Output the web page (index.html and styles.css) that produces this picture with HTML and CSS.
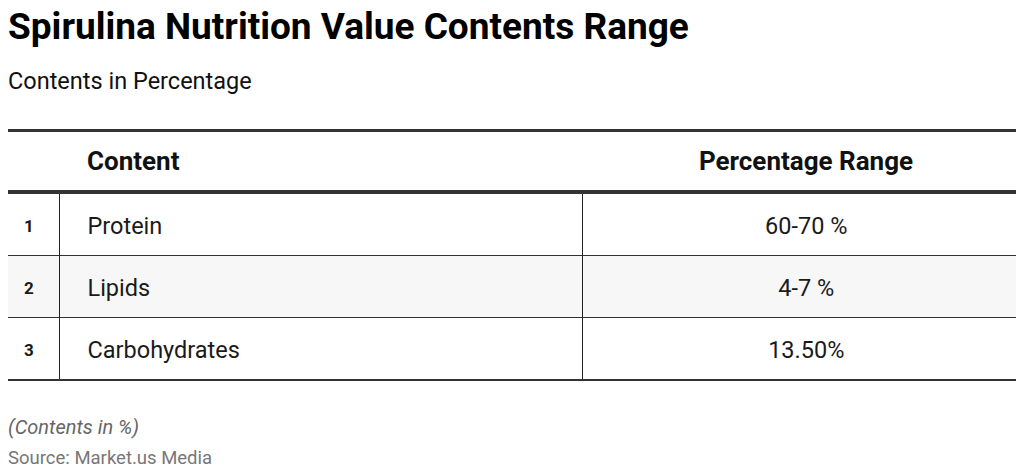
FILE: index.html
```html
<!DOCTYPE html>
<html lang="en">
<head>
<meta charset="utf-8">
<title>Spirulina Nutrition Value Contents Range</title>
<link rel="stylesheet" href="styles.css">
</head>
<body>
<div class="page">
  <h1 class="title">Spirulina Nutrition Value Contents Range</h1>
  <p class="subtitle">Contents in Percentage</p>
  <table class="data">
    <thead>
      <tr>
        <th class="c-num"></th>
        <th class="c-name">Content</th>
        <th class="c-val">Percentage Range</th>
      </tr>
    </thead>
    <tbody>
      <tr>
        <td class="c-num">1</td>
        <td class="c-name">Protein</td>
        <td class="c-val">60-70 %</td>
      </tr>
      <tr class="alt">
        <td class="c-num">2</td>
        <td class="c-name">Lipids</td>
        <td class="c-val">4-7 %</td>
      </tr>
      <tr>
        <td class="c-num">3</td>
        <td class="c-name">Carbohydrates</td>
        <td class="c-val">13.50%</td>
      </tr>
    </tbody>
  </table>
  <p class="note">(Contents in %)</p>
  <p class="source">Source: Market.us Media</p>
</div>
</body>
</html>
```

FILE: styles.css
```css
html, body {
  margin: 0;
  padding: 0;
  background: #fff;
}
body {
  padding: 8px;
  font-family: Roboto, "Liberation Sans", Arial, sans-serif;
  color: #1a1a1a;
}
.page {
  width: 1008px;
}
.title {
  margin: 0;
  font-size: 37px;
  line-height: 38px;
  font-weight: 700;
  color: #000;
}
.subtitle {
  margin: 21px 0 0;
  font-size: 23.5px;
  line-height: 28px;
  color: #111;
}
.data {
  margin-top: 34px;
  width: 1008px;
  border-collapse: collapse;
  table-layout: fixed;
}
.data thead tr {
  border-top: 3px solid #333;
  border-bottom: 4px solid #333;
}
.data th {
  height: 58px;
  padding: 0;
  font-size: 26px;
  font-weight: 700;
  color: #111;
}
.data td {
  height: 59px;
  padding: 2px 0 0;
  font-size: 23.5px;
  color: #1a1a1a;
}
.data tbody tr {
  border-bottom: 1px solid #333;
}
.data tbody tr:last-child {
  border-bottom: 2px solid #333;
}
.data tbody tr.alt {
  background: #f7f7f7;
}
.c-num {
  width: 35px;
}
.data th.c-num,
.data td.c-num {
  padding-left: 16px;
}
.data td.c-num {
  font-size: 17px;
  font-weight: 700;
  border-right: 1px solid #222;
}
.c-name {
  text-align: left;
  width: 495px;
}
.data th.c-name,
.data td.c-name {
  padding-left: 28px;
}
.data td.c-name {
  border-right: 1px solid #222;
}
.c-val {
  text-align: center;
}
.data th.c-val,
.data td.c-val {
  padding-left: 28px;
  padding-right: 14px;
}
.note {
  margin: 34px 0 0;
  font-size: 20px;
  line-height: 24px;
  font-style: italic;
  color: #666;
}
.source {
  margin: 8px 0 0;
  font-size: 18.5px;
  line-height: 22px;
  color: #777;
}
```
